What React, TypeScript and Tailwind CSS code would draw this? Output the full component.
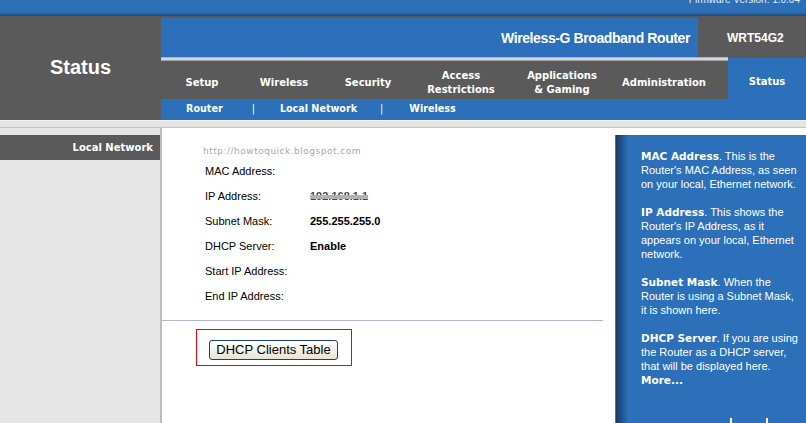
import React from 'react';

const tabs = [
  { w: 'w-[82px]', label: ['Setup'] },
  { w: 'w-[82px]', label: ['Wireless'] },
  { w: 'w-[86px]', label: ['Security'] },
  { w: 'w-[100px]', label: ['Access', 'Restrictions'] },
  { w: 'w-[102px]', label: ['Applications', '& Gaming'] },
  { w: 'w-[102px]', label: ['Administration'] },
];

const rows = [
  { label: 'MAC Address:', value: '' },
  { label: 'IP Address:', value: '192.168.1.1', blurred: true },
  { label: 'Subnet Mask:', value: '255.255.255.0' },
  { label: 'DHCP Server:', value: 'Enable' },
  { label: 'Start IP Address:', value: '' },
  { label: 'End IP Address:', value: '' },
];

const help = [
  { title: 'MAC Address', lines: ['. This is the', "Router's MAC Address, as seen", 'on your local, Ethernet network.'] },
  { title: 'IP Address', lines: ['. This shows the', "Router's IP Address, as it", 'appears on your local, Ethernet', 'network.'] },
  { title: 'Subnet Mask', lines: ['. When the', 'Router is using a Subnet Mask,', 'it is shown here.'] },
  { title: 'DHCP Server', lines: ['. If you are using', 'the Router as a DHCP server,', 'that will be displayed here.'] },
];

const verdanaBold = "font-['DejaVu_Sans',Verdana,sans-serif] font-bold";

export default function App(): JSX.Element {
  return (
    <div className="h-[423px] w-[806px] overflow-hidden flex flex-col bg-white font-['Liberation_Sans',Arial,sans-serif]">
      {/* top strip */}
      <div className="h-[16px] shrink-0 bg-linear-to-b from-[#2b70b8] from-75% to-[#1c4b7d] flex justify-end overflow-hidden">
        <span className="mt-[-6px] mr-[6px] text-[10px] leading-[12px] text-[#e4ecf6]">
          Firmware Version: 1.0.04
        </span>
      </div>

      {/* header */}
      <div className="h-[104px] shrink-0 flex bg-[#5a5a5a]">
        <div className="w-[161px] pt-[40px] text-center text-white text-[20px] font-bold leading-[23px]">
          Status
        </div>
        <div className="flex-1 flex flex-col">
          <div className="h-[41px] flex">
            <div className="flex-1 mt-[2px] bg-[#2b70b8] flex items-center justify-end pr-[8px] pt-[1px]">
              <span className="text-white text-[14px] font-bold tracking-[-0.4px]">
                Wireless-G Broadband Router
              </span>
            </div>
            <div className="w-[108px] flex items-center pl-[29px] pt-[2px]">
              <span className="text-white text-[12px] font-bold">WRT54G2</span>
            </div>
          </div>
          <div className="flex-1 flex">
            <div className="w-[567px] flex flex-col">
              <div className="h-[4px] bg-linear-to-b from-[#9c9cac] via-[#ececf0] to-[#8c8c8c]" />
              <div className="h-[38px] flex items-center pt-[6px]">
                {tabs.map((t) => (
                  <div
                    key={t.label[0]}
                    className={`${t.w} text-center text-white text-[10px] leading-[14px] ${verdanaBold}`}>
                    {t.label.map((l) => (
                      <div key={l}>{l}</div>
                    ))}
                  </div>
                ))}
              </div>
              <div className={`h-[21px] bg-[#2b70b8] flex items-center pl-[25px] text-white text-[9.6px] ${verdanaBold}`}>
                <span>Router</span>
                <span className="ml-[29px] font-normal">|</span>
                <span className="ml-[25px]">Local Network</span>
                <span className="ml-[23px] font-normal">|</span>
                <span className="ml-[26px]">Wireless</span>
              </div>
            </div>
            <div className={`flex-1 mt-[1px] bg-[#2b70b8] pt-[17px] text-center text-white text-[10px] leading-[14px] ${verdanaBold}`}>
              Status
            </div>
          </div>
        </div>
      </div>

      {/* body */}
      <div className="h-[8px] shrink-0 bg-[#e4e4e4] border-t border-[#f4f4f4] border-b border-b-[#c4c4c4]" />
      <div className="flex-1 flex">
        <div className="w-[160px] bg-[#e6e6e6] pt-[7px]">
          <div className={`h-[25px] bg-[#5a5a5a] flex items-center justify-end pr-[7px] text-white text-[10px] ${verdanaBold}`}>
            Local Network
          </div>
        </div>

        <div className="w-[455px] border-l-2 border-[#bcbcbc] bg-white flex flex-col">
          <div className="pl-[41px] pt-[17px] text-[9px] leading-[12px] tracking-[0.5px] text-[#a8a8a8] font-['DejaVu_Sans',Verdana,sans-serif]">
            http://howtoquick.blogspot.com
          </div>
          <div className="pl-[43px] pt-[2px]">
            {rows.map((r) => (
              <div key={r.label} className="h-[25px] flex items-center text-[11px] text-black">
                <span className="w-[105px]">{r.label}</span>
                {r.blurred ? (
                  <span className="font-bold text-[#444] blur-[0.7px] line-through decoration-[#b0b0b0] decoration-[4px]">
                    {r.value}
                  </span>
                ) : (
                  <span className="font-bold">{r.value}</span>
                )}
              </div>
            ))}
          </div>
          <div className="mt-[11px] mr-[12px] h-px bg-[#b4b4d6]" />
          <div className="mt-[8px] ml-[34px] w-[156px] h-[37px] border border-[#ff0000] pl-[12px] pt-[7px]">
            <button className="w-[129px] h-[20px] rounded-[3px] border border-[#1e3f72] bg-linear-to-b from-white to-[#e6e3d6] text-[13px] leading-[16px] text-black">
              DHCP Clients Table
            </button>
          </div>
        </div>

        <div className="flex-1 bg-white pt-[7px] flex flex-col">
          <div className="flex-1 border-l border-[#6a6a6a] bg-[linear-gradient(to_right,#183a62_0px,#2b70b8_12px)] flex flex-col text-white text-[11px] leading-[14px] pt-[14px] pl-[25px]">
            {help.map((h, i) => (
              <div key={h.title} className={i > 0 ? 'mt-[14px]' : ''}>
                <div className="whitespace-nowrap">
                  <span className={`text-[10.5px] ${verdanaBold}`}>{h.title}</span>
                  {h.lines[0]}
                </div>
                {h.lines.slice(1).map((l) => (
                  <div key={l} className="whitespace-nowrap">
                    {l}
                  </div>
                ))}
              </div>
            ))}
            <div className={`text-[10.5px] ${verdanaBold}`}>More...</div>
            <div className="flex-1" />
            <div className="h-[5px] flex pl-[89px]">
              <div className="w-[2px] h-[5px] bg-white" />
              <div className="ml-[34px] w-[2px] h-[5px] bg-white" />
            </div>
          </div>
        </div>
      </div>
    </div>
  );
}
